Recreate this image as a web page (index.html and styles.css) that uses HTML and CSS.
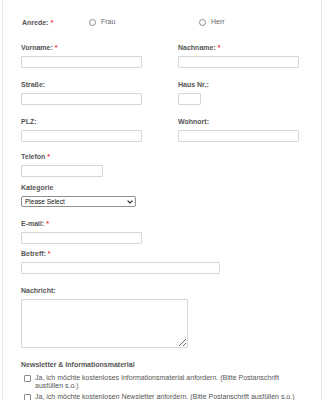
FILE: index.html
```html
<!DOCTYPE html>
<html lang="de">
<head>
  <meta charset="UTF-8" />
  <meta name="viewport" content="width=device-width, initial-scale=1.0" />
  <title>Kontaktformular</title>
  <link rel="stylesheet" href="styles.css">
</head>
<body>
  <form class="form-box">
    <div class="anrede">
      <span class="label anrede-label">Anrede: <span class="req">*</span></span>
      <label class="option"><input type="radio" name="anrede"> Frau</label>
      <label class="option"><input type="radio" name="anrede"> Herr</label>
    </div>

    <div class="row row-first">
      <div class="field">
        <label class="label">Vorname: <span class="req">*</span></label>
        <input type="text" class="input w-full">
      </div>
      <div class="field">
        <label class="label">Nachname: <span class="req">*</span></label>
        <input type="text" class="input w-full">
      </div>
    </div>

    <div class="row">
      <div class="field">
        <label class="label">Straße:</label>
        <input type="text" class="input w-full">
      </div>
      <div class="field">
        <label class="label">Haus Nr.:</label>
        <input type="text" class="input w-haus">
      </div>
    </div>

    <div class="row">
      <div class="field">
        <label class="label">PLZ:</label>
        <input type="text" class="input w-full">
      </div>
      <div class="field">
        <label class="label">Wohnort:</label>
        <input type="text" class="input w-full">
      </div>
    </div>

    <div class="field gap-11">
      <label class="label">Telefon <span class="req">*</span></label>
      <input type="tel" class="input w-tel">
    </div>

    <div class="field gap-7">
      <label class="label">Kategorie</label>
      <div class="select-wrap">
        <select class="select">
          <option>Please Select</option>
        </select>
        <svg class="chevron" width="6" height="4" viewBox="0 0 6 4"><path d="M0.6 0.6 L3 3 L5.4 0.6" fill="none" stroke="#222" stroke-width="1.1"/></svg>
      </div>
    </div>

    <div class="field gap-13">
      <label class="label">E-mail: <span class="req">*</span></label>
      <input type="email" class="input w-full">
    </div>

    <div class="field gap-6">
      <label class="label">Betreff: <span class="req">*</span></label>
      <input type="text" class="input w-betreff">
    </div>

    <div class="field gap-13">
      <label class="label">Nachricht:</label>
      <textarea class="textarea"></textarea>
    </div>

    <div class="newsletter">
      <div class="label">Newsletter &amp; Informationsmaterial</div>
      <label class="check">
        <input type="checkbox">
        <span>Ja, ich möchte kostenloses Informationsmaterial anfordern. (Bitte Postanschrift ausfüllen s.o.)</span>
      </label>
      <label class="check">
        <input type="checkbox">
        <span>Ja, ich möchte kostenlosen Newsletter anfordern. (Bitte Postanschrift ausfüllen s.o.)</span>
      </label>
    </div>
  </form>
</body>
</html>
```

FILE: styles.css
```css
body {
  margin: 0;
  background-color: #fff;
  font-family: 'Liberation Sans', Arial, sans-serif;
  font-size: 7px;
  color: #555;
}

.form-box {
  margin-left: 2px;
  width: 320px;
  box-sizing: border-box;
  min-height: 400px;
  border-left: 1px solid #e6e6e6;
  border-right: 1px solid #e6e6e6;
  padding: 18px 0 0 18px;
}

.label {
  display: block;
  font-weight: 700;
  line-height: 8px;
  color: #555;
  margin-bottom: 4px;
}

.req {
  color: #f23a3c;
}

/* Anrede */
.anrede {
  display: flex;
  align-items: center;
  height: 8px;
  line-height: 8px;
}

.anrede-label {
  width: 67px;
  margin: 1px 0 0 1px;
  padding: 0;
}

.option {
  width: 110px;
  display: flex;
  align-items: center;
  color: #666;
}

.option input {
  appearance: none;
  width: 7px;
  height: 7px;
  margin: 0 5px 0 0;
  border: 1px solid #8a8a8a;
  border-radius: 50%;
  box-sizing: border-box;
  background: #fff;
}

/* rows */
.row {
  display: grid;
  grid-template-columns: 157px 157px;
  margin-top: 13px;
}

.row-first {
  margin-top: 18px;
}

.gap-11 { margin-top: 11px; }
.gap-7 { margin-top: 7px; }
.gap-13 { margin-top: 13px; }
.gap-6 { margin-top: 6px; }

.input {
  display: block;
  height: 12px;
  box-sizing: border-box;
  border: 1px solid #d6d6d6;
  border-radius: 1px;
  padding: 0 3px;
  margin: 0;
  font: inherit;
  background: #fff;
}

.w-full { width: 121px; }
.w-haus { width: 23px; }
.w-tel { width: 82px; }
.w-betreff { width: 199px; }

.select-wrap {
  position: relative;
  width: 115px;
}

.select {
  appearance: none;
  display: block;
  width: 115px;
  height: 11px;
  box-sizing: border-box;
  margin: 0;
  padding: 0 0 0 3px;
  border: 1px solid #8f8f8f;
  border-radius: 2px;
  background: #fff;
  font-family: 'Liberation Sans', Arial, sans-serif;
  font-size: 6.5px;
  color: #111;
  line-height: 9px;
}

.chevron {
  position: absolute;
  right: 3px;
  top: 4px;
}

.textarea {
  display: block;
  width: 167px;
  height: 49px;
  box-sizing: border-box;
  margin: 0;
  border: 1px solid #d6d6d6;
  border-radius: 1px;
  font: inherit;
}

/* checkboxes */
.newsletter {
  margin-top: 13px;
}

.newsletter .label {
  margin-bottom: 5px;
}

.check {
  display: flex;
  align-items: flex-start;
  width: 285px;
  line-height: 8px;
  color: #555;
  margin-bottom: 3px;
}

.check input {
  appearance: none;
  flex: none;
  width: 7px;
  height: 7px;
  margin: 1px 4px 0 3px;
  border: 1px solid #8a8a8a;
  border-radius: 1px;
  box-sizing: border-box;
  background: #fff;
}

.check span {
  width: 266px;
}
```
